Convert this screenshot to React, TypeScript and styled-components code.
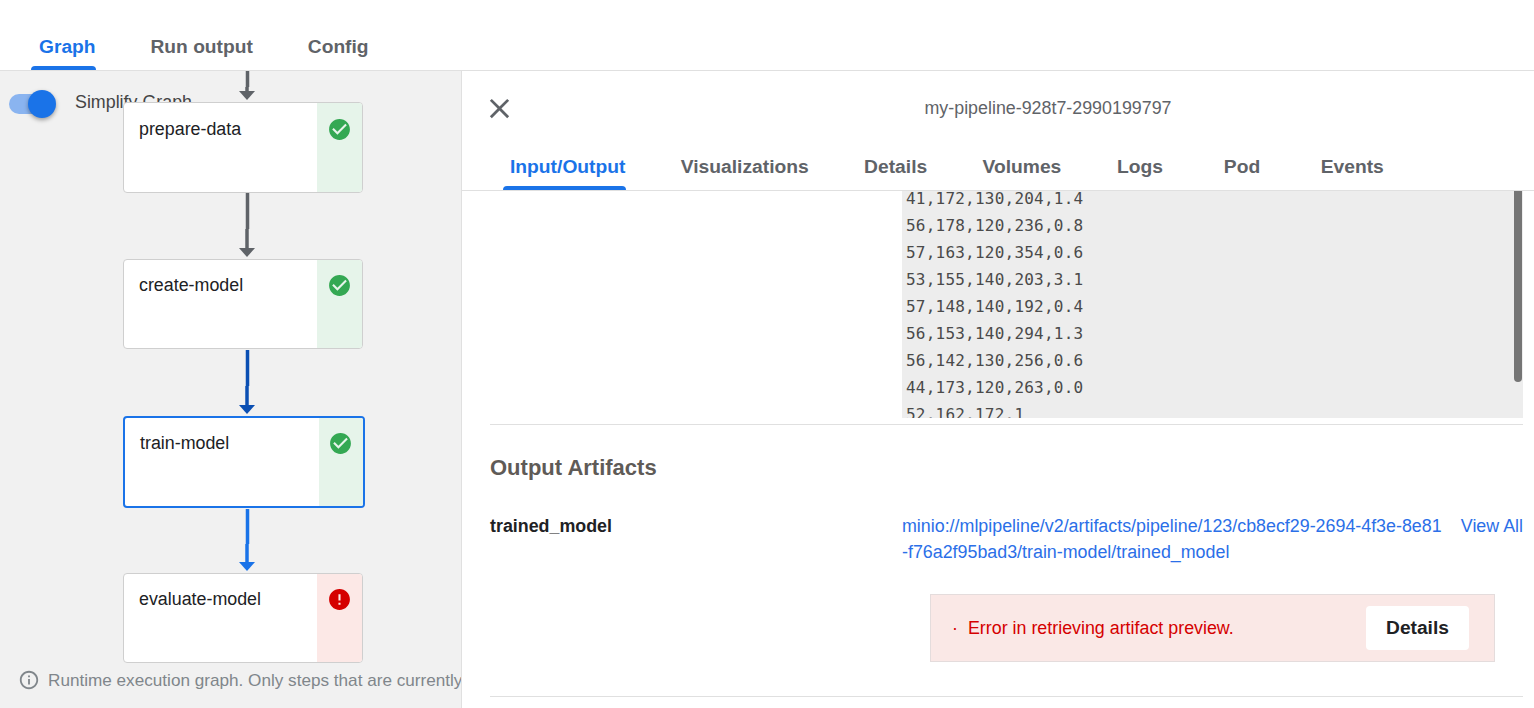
import React from 'react';
import styled, { createGlobalStyle } from 'styled-components';

const GlobalStyle = createGlobalStyle`
  html, body {
    margin: 0;
    padding: 0;
    height: 100%;
    overflow: hidden;
    background: #fff;
    font-family: 'Liberation Sans', Arial, sans-serif;
  }
`;

const colors = {
  blue: '#1a73e8',
  darkBlue: '#0b4fb3',
  grey: '#5f6368',
  green: '#34a853',
  red: '#d50000',
  link: '#2b6fe8',
  divider: '#e0e0e0',
};

const CHECK_PATH =
  'M12 2C6.48 2 2 6.48 2 12s4.48 10 10 10 10-4.48 10-10S17.52 2 12 2zm-2 15l-5-5 1.41-1.41L10 14.17l7.59-7.59L19 8l-9 9z';
const ERROR_PATH =
  'M12 2C6.48 2 2 6.48 2 12s4.48 10 10 10 10-4.48 10-10S17.52 2 12 2zm1 15h-2v-2h2v2zm0-4h-2V7h2v6z';
const INFO_PATH =
  'M11 7h2v2h-2zm0 4h2v6h-2zm1-9C6.48 2 2 6.48 2 12s4.48 10 10 10 10-4.48 10-10S17.52 2 12 2zm0 18c-4.41 0-8-3.59-8-8s3.59-8 8-8 8 3.59 8 8-3.59 8-8 8z';
const CLOSE_PATH =
  'M19 6.41L17.59 5 12 10.59 6.41 5 5 6.41 10.59 12 5 17.59 6.41 19 12 13.41 17.59 19 19 17.59 13.41 12z';

interface GraphNode {
  name: string;
  top: number;
  status: 'ok' | 'error';
  selected?: boolean;
}

interface GraphEdge {
  top: number;
  height: number;
  color: string;
}

const nodes: GraphNode[] = [
  { name: 'prepare-data', top: 31, status: 'ok' },
  { name: 'create-model', top: 187.6, status: 'ok' },
  { name: 'train-model', top: 344.6, status: 'ok', selected: true },
  { name: 'evaluate-model', top: 501.6, status: 'error' },
];

const edges: GraphEdge[] = [
  { top: 0, height: 29, color: colors.grey },
  { top: 122, height: 64, color: colors.grey },
  { top: 279, height: 64, color: colors.darkBlue },
  { top: 438, height: 62, color: colors.blue },
];

const csvLines = [
  '41,172,130,204,1.4',
  '56,178,120,236,0.8',
  '57,163,120,354,0.6',
  '53,155,140,203,3.1',
  '57,148,140,192,0.4',
  '56,153,140,294,1.3',
  '56,142,130,256,0.6',
  '44,173,120,263,0.0',
  '52,162,172,1',
];

const Edge = ({ edge }: { edge: GraphEdge }) => {
  const h = edge.height;
  const mid = Math.round(h * 0.56);
  return (
    <EdgeSvg $top={edge.top} width="20" height={h} viewBox={`0 0 20 ${h}`}>
      <path d={`M10.5 0V${mid}`} stroke={edge.color} strokeWidth="3.5" fill="none" />
      <path d={`M10 ${mid}V${h - 6}`} stroke={edge.color} strokeWidth="3.5" fill="none" />
      <path d={`M2 ${h - 9}H18L10 ${h}Z`} fill={edge.color} />
    </EdgeSvg>
  );
};

const App = () => (
  <Page>
    <GlobalStyle />
    <TopTabs>
      <TopTab $active>Graph</TopTab>
      <TopTab>Run output</TopTab>
      <TopTab>Config</TopTab>
    </TopTabs>
    <Body>
      <GraphPanel>
        <ToggleRow>
          <Toggle>
            <ToggleThumb />
          </Toggle>
          <ToggleLabel>Simplify Graph</ToggleLabel>
        </ToggleRow>
        <Canvas>
          {edges.map((edge) => (
            <Edge key={edge.top} edge={edge} />
          ))}
          {nodes.map((node) => (
            <Node key={node.name} $top={node.top} $selected={node.selected}>
              <NodeName>{node.name}</NodeName>
              <NodeStatus $status={node.status} $selected={node.selected}>
                <svg width="25" height="25" viewBox="0 0 24 24">
                  <path
                    d={node.status === 'ok' ? CHECK_PATH : ERROR_PATH}
                    fill={node.status === 'ok' ? colors.green : colors.red}
                  />
                </svg>
              </NodeStatus>
            </Node>
          ))}
        </Canvas>
        <Footnote>
          <svg width="22" height="22" viewBox="0 0 24 24">
            <path d={INFO_PATH} fill="#80868b" />
          </svg>
          <span>Runtime execution graph. Only steps that are currently running or have already completed are shown.</span>
        </Footnote>
      </GraphPanel>
      <SidePanel>
        <SideHeader>
          <CloseButton>
            <svg width="33" height="33" viewBox="0 0 24 24">
              <path d={CLOSE_PATH} fill={colors.grey} />
            </svg>
          </CloseButton>
          <SideTitle>my-pipeline-928t7-2990199797</SideTitle>
        </SideHeader>
        <SideTabs>
          <SideTab $active>Input/Output</SideTab>
          <SideTab>Visualizations</SideTab>
          <SideTab>Details</SideTab>
          <SideTab>Volumes</SideTab>
          <SideTab>Logs</SideTab>
          <SideTab>Pod</SideTab>
          <SideTab>Events</SideTab>
        </SideTabs>
        <SideContent>
          <CodeRow>
            <CodeBox>
              <Code>{csvLines.join('\n')}</Code>
              <ScrollThumb />
            </CodeBox>
          </CodeRow>
          <Divider />
          <SectionTitle>Output Artifacts</SectionTitle>
          <ArtifactRow>
            <ArtifactName>trained_model</ArtifactName>
            <ArtifactLinks>
              <ArtifactPath>
                minio://mlpipeline/v2/artifacts/pipeline/123/cb8ecf29-2694-4f3e-8e81
                <br />
                -f76a2f95bad3/train-model/trained_model
              </ArtifactPath>
              <ViewAll>View All</ViewAll>
            </ArtifactLinks>
          </ArtifactRow>
          <ErrorBanner>
            <ErrorText>
              <ErrorDot>·</ErrorDot>
              Error in retrieving artifact preview.
            </ErrorText>
            <DetailsButton>Details</DetailsButton>
          </ErrorBanner>
          <Divider />
        </SideContent>
      </SidePanel>
    </Body>
  </Page>
);

export default App;

const Page = styled.div`
  width: 1534px;
  height: 708px;
  display: flex;
  flex-direction: column;
  overflow: hidden;
`;

const TopTabs = styled.div`
  height: 70px;
  flex-shrink: 0;
  display: flex;
  align-items: flex-end;
  padding-left: 11px;
  border-bottom: 1px solid ${colors.divider};
`;

const TopTab = styled.div<{ $active?: boolean }>`
  position: relative;
  padding: 0 27px 13px 28px;
  font-size: 19.2px;
  line-height: 21px;
  font-weight: 700;
  color: ${({ $active }) => ($active ? colors.blue : colors.grey)};

  &::after {
    content: '';
    display: ${({ $active }) => ($active ? 'block' : 'none')};
    position: absolute;
    left: 20px;
    right: 27px;
    bottom: 0;
    height: 4px;
    background: ${colors.blue};
    border-radius: 5px 5px 0 0;
  }
`;

const Body = styled.div`
  flex: 1;
  display: flex;
  min-height: 0;
`;

const GraphPanel = styled.div`
  position: relative;
  width: 461px;
  flex-shrink: 0;
  background: #f1f1f1;
  border-right: 1px solid ${colors.divider};
  display: flex;
  flex-direction: column;
  justify-content: space-between;
  overflow: hidden;
`;

const ToggleRow = styled.div`
  display: flex;
  align-items: center;
  padding: 19px 0 0 9px;
  height: 28px;
`;

const Toggle = styled.div`
  position: relative;
  width: 41px;
  height: 20px;
  border-radius: 10px;
  background: #8ab4f0;
`;

const ToggleThumb = styled.div`
  position: absolute;
  left: 19px;
  top: -4px;
  width: 28px;
  height: 28px;
  border-radius: 50%;
  background: ${colors.blue};
  box-shadow: 0 2px 4px rgba(0, 0, 0, 0.35);
`;

const ToggleLabel = styled.span`
  margin: 0 0 3px 25px;
  font-size: 17.85px;
  color: #444;
  white-space: nowrap;
`;

const Canvas = styled.div`
  position: absolute;
  inset: 0;
`;

const EdgeSvg = styled.svg<{ $top: number }>`
  position: absolute;
  left: 237px;
  top: ${({ $top }) => $top}px;
`;

const Node = styled.div<{ $top: number; $selected?: boolean }>`
  position: absolute;
  left: 123px;
  top: ${({ $top }) => $top}px;
  width: ${({ $selected }) => ($selected ? 242 : 240)}px;
  height: ${({ $selected }) => ($selected ? 92.6 : 90.6)}px;
  box-sizing: border-box;
  display: flex;
  background: #fff;
  border: ${({ $selected }) => ($selected ? `2px solid ${colors.blue}` : '1px solid #cfcfcf')};
  border-radius: 4px;
  overflow: hidden;
`;

const NodeName = styled.div`
  flex: 1;
  padding: 14.6px 0 0 15px;
  font-size: 17.85px;
  line-height: 22px;
  color: #202124;
`;

const NodeStatus = styled.div<{ $status: 'ok' | 'error'; $selected?: boolean }>`
  width: ${({ $selected }) => ($selected ? 44 : 45)}px;
  box-sizing: border-box;
  padding: 13.6px 0 0 ${({ $selected }) => ($selected ? 9 : 10)}px;
  background: ${({ $status }) => ($status === 'ok' ? '#e6f4ea' : '#fce8e6')};
`;

const Footnote = styled.div`
  display: flex;
  align-items: center;
  gap: 8px;
  padding: 0 0 17px 18px;
  font-size: 17.15px;
  line-height: 22px;
  color: #80868b;
  white-space: nowrap;

  svg {
    flex-shrink: 0;
  }
`;

const SidePanel = styled.div`
  flex: 1;
  min-width: 0;
  display: flex;
  flex-direction: column;
  background: #fff;
`;

const SideHeader = styled.div`
  position: relative;
  height: 74px;
  display: flex;
  align-items: center;
  justify-content: center;
`;

const CloseButton = styled.div`
  position: absolute;
  left: 21px;
  top: 21px;
  line-height: 0;
`;

const SideTitle = styled.div`
  padding-left: 100px;
  font-size: 17.85px;
  color: ${colors.grey};
`;

const SideTabs = styled.div`
  height: 45px;
  flex-shrink: 0;
  display: flex;
  align-items: flex-end;
  padding-left: 20px;
  border-bottom: 1px solid ${colors.divider};
`;

const SideTab = styled.div<{ $active?: boolean }>`
  position: relative;
  box-sizing: border-box;
  min-width: 102px;
  padding: 0 27.3px 13px 28px;
  text-align: center;
  font-size: 19.25px;
  line-height: 21px;
  font-weight: 700;
  color: ${({ $active }) => ($active ? colors.blue : colors.grey)};

  &::after {
    content: '';
    display: ${({ $active }) => ($active ? 'block' : 'none')};
    position: absolute;
    left: 21px;
    right: 27px;
    bottom: 0;
    height: 4px;
    background: ${colors.blue};
    border-radius: 5px 5px 0 0;
  }
`;

const SideContent = styled.div`
  flex: 1;
  min-height: 0;
  padding: 0 11px 0 28px;
  overflow: hidden;
`;

const CodeRow = styled.div`
  padding: 0 0 6px 412px;
`;

const CodeBox = styled.div`
  position: relative;
  height: 227px;
  background: #ededed;
  overflow: hidden;
`;

const Code = styled.pre`
  margin: -6px 0 0;
  padding-left: 4px;
  font-family: 'DejaVu Sans Mono', 'Liberation Mono', monospace;
  font-size: 16px;
  letter-spacing: 0.22px;
  line-height: 27px;
  color: #4a4a4a;
`;

const ScrollThumb = styled.div`
  position: absolute;
  top: 0;
  right: 1px;
  width: 8px;
  height: 191px;
  background: #757575;
  border-radius: 0 0 4px 4px;
`;

const Divider = styled.div`
  height: 1px;
  background: ${colors.divider};
`;

const SectionTitle = styled.h2`
  margin: 30px 0 0;
  font-size: 22px;
  line-height: 26px;
  font-weight: 700;
  color: #5f5b57;
`;

const ArtifactRow = styled.div`
  display: flex;
  margin-top: 32px;
  font-size: 17.85px;
  line-height: 26px;
`;

const ArtifactName = styled.div`
  width: 412px;
  flex-shrink: 0;
  font-weight: 700;
  color: #202124;
`;

const ArtifactLinks = styled.div`
  flex: 1;
  display: flex;
  justify-content: space-between;
`;

const ArtifactPath = styled.a`
  color: ${colors.link};
`;

const ViewAll = styled.a`
  color: ${colors.link};
`;

const ErrorBanner = styled.div`
  box-sizing: border-box;
  width: 565px;
  height: 68px;
  margin: 29px 0 34px 440px;
  padding: 0 25px 0 21px;
  display: flex;
  align-items: center;
  justify-content: space-between;
  background: #fae8e6;
  border: 1px solid #e4dcdc;
`;

const ErrorText = styled.div`
  font-size: 17.85px;
  color: ${colors.red};
`;

const ErrorDot = styled.span`
  margin-right: 10px;
`;

const DetailsButton = styled.div`
  width: 103px;
  height: 44px;
  display: flex;
  align-items: center;
  justify-content: center;
  background: #fff;
  border-radius: 4px;
  font-size: 19.2px;
  font-weight: 700;
  color: #202124;
`;
